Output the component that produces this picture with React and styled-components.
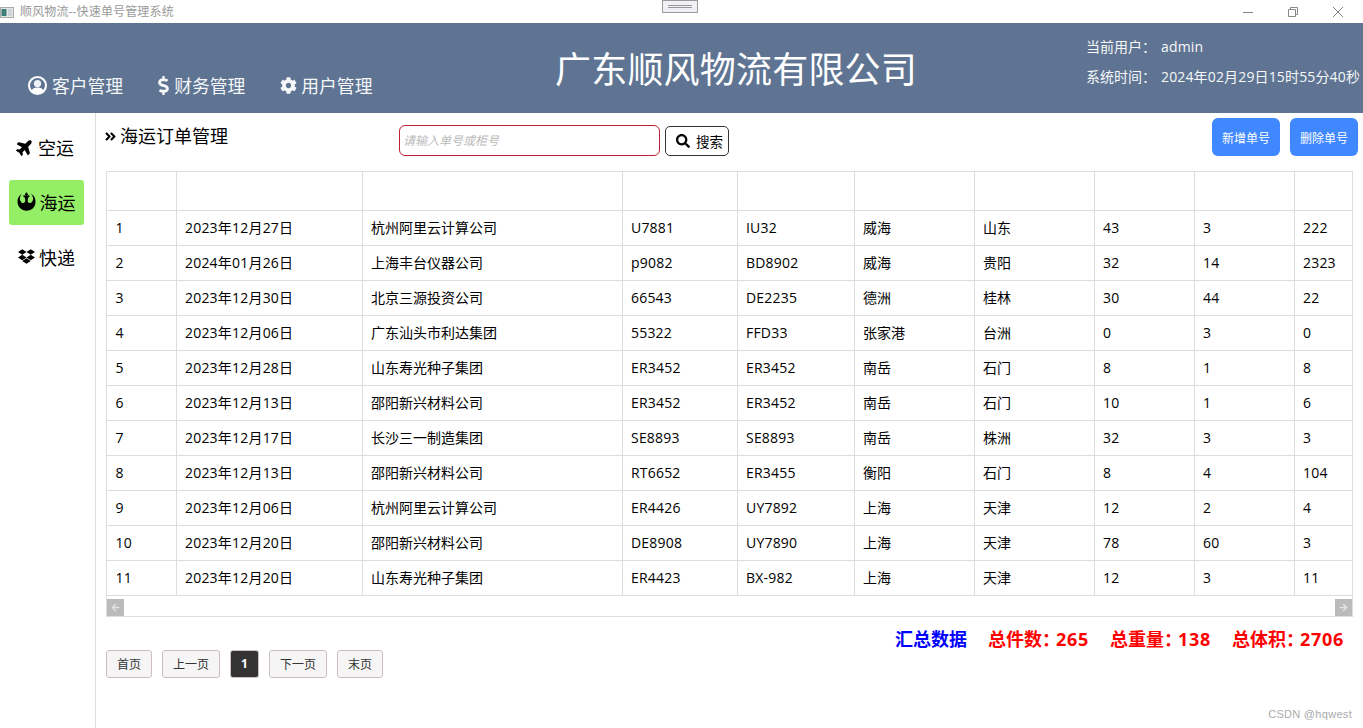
import React from 'react';
import styled, { createGlobalStyle } from 'styled-components';
import { FaCog, FaDollarSign, FaPlane, FaRebel, FaDropbox, FaAngleDoubleRight, FaSearch, FaArrowLeft, FaArrowRight } from 'react-icons/fa';

const FONT = '"Open Sans", "Noto Sans CJK SC", sans-serif';

const Global = createGlobalStyle`
  html, body { margin: 0; padding: 0; background: #fff; overflow: hidden; }
  body { font-family: ${FONT}; color: #000; }
  * { box-sizing: border-box; }
`;

const Page = styled.div`
  width: 1363px; height: 728px; display: flex; flex-direction: column; position: relative; overflow: hidden;
`;
const TitleBar = styled.div`
  height: 23px; display: flex; align-items: center; position: relative; background: #fff;
`;
const AppName = styled.span`
  font-size: 12px; color: #999; margin-left: 6px; line-height: 23px; letter-spacing: 0.15px;
`;
const DragHandle = styled.div`
  position: absolute; left: 662px; top: 0; width: 36px; height: 13px; background: #f0f0f5; border: 1px solid #999;
  display: flex; flex-direction: column; justify-content: center; gap: 1px; padding: 0 5px;
  &::before, &::after { content: ""; height: 1px; background: #999; }
`;
const WindowControls = styled.div`
  margin-left: auto; display: flex; align-items: center; gap: 35px; padding-right: 20px;
`;
const Header = styled.header`
  height: 90px; background: #5e7492; color: #fff; display: flex;
`;
const Nav = styled.nav`
  display: flex; align-items: center; gap: 35px; padding: 35px 0 0 28px; height: 90px; width: 480px;
`;
const NavItem = styled.div`
  display: flex; align-items: center; gap: ${p => p.$gap}px; font-size: 17.8px; line-height: 26px; color: #f4f6f8;
  svg { display: block; margin-left: ${p => p.$inset}px; }
`;
const CompanyName = styled.h1`
  margin: 0 0 0 75px; padding-top: 2px; font-size: 36px; font-weight: 400; line-height: 90px; width: 362px; white-space: nowrap; letter-spacing: 0.2px;
`;
const UserInfo = styled.div`
  margin-left: auto; width: 277px; padding-top: 9px; font-size: 14px; line-height: 30px; white-space: nowrap; color: #f7f8fa;
`;
const InfoLabel = styled.span`
  margin-right: 5px;
`;
const InfoValue = styled.span`
  letter-spacing: 0.15px;
`;
const Body = styled.div`
  flex: 1; display: flex; min-height: 0;
`;
const Sidebar = styled.aside`
  width: 96px; border-right: 1px solid #ddd; padding: 12px 11px 0 9px; display: flex; flex-direction: column; gap: 10px;
`;
const SideItem = styled.div`
  height: 45px; border-radius: 3px; display: flex; align-items: center; gap: ${p => p.$gap}px; padding: 0 0 2px ${p => p.$pad}px;
  font-size: 18px; background: ${p => (p.$active ? '#94ee66' : 'transparent')};
  svg { transform: rotate(${p => p.$turn || 0}deg); }
`;
const Main = styled.main`
  flex: 1; padding: 5px 5px 0 10px; min-width: 0;
`;
const Toolbar = styled.div`
  height: 53px; display: flex; align-items: flex-start;
`;
const SectionTitle = styled.div`
  width: 295px; display: flex; align-items: center; gap: 3px; font-size: 18px; line-height: 26px; padding-top: 5px; margin-left: -2px;
`;
const SearchInput = styled.input`
  width: 261px; height: 31px; margin-top: 7px; border: 1px solid #c02030; border-radius: 6px; padding: 0 3px; font: italic 12px ${FONT}; outline: none;
  &::placeholder { color: #bbb; opacity: 1; }
`;
const SearchButton = styled.button`
  width: 64px; height: 30px; margin: 8px 0 0 5px; border: 1px solid #333; border-radius: 5px; background: #fff; font: 13.5px ${FONT};
  display: flex; align-items: center; justify-content: center; gap: 6px; padding: 0 0 0 5px; color: #000;
`;
const Actions = styled.div`
  margin-left: auto; display: flex; gap: 10px;
`;
const ActionButton = styled.button`
  width: 68px; height: 38px; border: none; border-radius: 6px; background: #4088ff; color: #fff; font: 12px ${FONT}; padding: 1px 0 0;
`;
const TableFrame = styled.div`
  width: 1247px; border: 1px solid #ddd; overflow: hidden;
`;
const Table = styled.table`
  table-layout: fixed; border-collapse: collapse; width: 1245px; font-size: 14px;
`;
const Col = styled.col`
  width: ${p => p.$w}px;
`;
const HeadCell = styled.th`
  height: 38px; border-right: 1px solid #ddd; border-bottom: 1px solid #ddd; padding: 0;
  &:last-child { border-right: none; }
`;
const Cell = styled.td`
  height: 35px; padding: 0 8px 0 8.5px; border-right: 1px solid #ddd; border-bottom: 1px solid #ddd; white-space: nowrap; line-height: 20px; letter-spacing: 0.2px;
  &:nth-child(3), &:nth-child(6), &:nth-child(7) { letter-spacing: 0; }
  &:last-child { border-right: none; }
`;
const ScrollBar = styled.div`
  height: 20px; display: flex; justify-content: space-between; align-items: flex-start;
`;
const ScrollButton = styled.div`
  width: 17px; height: 17px; background: #bbb; color: #e4e4e4; display: flex; align-items: center; justify-content: center; margin-top: 3px;
`;
const Summary = styled.div`
  display: flex; justify-content: flex-end; gap: 21px; padding: 9px 9px 0 0; font-size: 18px; font-weight: 700; line-height: 26px; width: 1247px;
`;
const SummaryItem = styled.span`
  color: ${p => p.$color};
`;
const SummaryColon = styled.span`
  font-feature-settings: "halt";
  margin-right: 5px;
`;
const SummaryNumber = styled.span`
  letter-spacing: 0.7px;
`;
const Pager = styled.div`
  display: flex; gap: 10px; margin-top: -2px;
`;
const PageButton = styled.button`
  height: 28px; width: ${p => p.$w}px; padding: 0; border-radius: 3px; border: 1px solid #cdbfbf; font: ${p => (p.$active ? 700 : 400)} 12px ${FONT};
  background: ${p => (p.$active ? '#333' : '#f5f5f5')}; color: ${p => (p.$active ? '#fff' : '#333')};
`;
const Watermark = styled.div`
  position: absolute; right: 11px; bottom: 8px; font: 11px "Liberation Sans", sans-serif; color: #aaa; letter-spacing: 0.3px;
`;

const widths = [69, 186, 260, 115, 117, 120, 120, 100, 100, 58];
const rows = [
  ['1', '2023年12月27日', '杭州阿里云计算公司', 'U7881', 'IU32', '威海', '山东', '43', '3', '222'],
  ['2', '2024年01月26日', '上海丰台仪器公司', 'p9082', 'BD8902', '威海', '贵阳', '32', '14', '2323'],
  ['3', '2023年12月30日', '北京三源投资公司', '66543', 'DE2235', '德洲', '桂林', '30', '44', '22'],
  ['4', '2023年12月06日', '广东汕头市利达集团', '55322', 'FFD33', '张家港', '台洲', '0', '3', '0'],
  ['5', '2023年12月28日', '山东寿光种子集团', 'ER3452', 'ER3452', '南岳', '石门', '8', '1', '8'],
  ['6', '2023年12月13日', '邵阳新兴材料公司', 'ER3452', 'ER3452', '南岳', '石门', '10', '1', '6'],
  ['7', '2023年12月17日', '长沙三一制造集团', 'SE8893', 'SE8893', '南岳', '株洲', '32', '3', '3'],
  ['8', '2023年12月13日', '邵阳新兴材料公司', 'RT6652', 'ER3455', '衡阳', '石门', '8', '4', '104'],
  ['9', '2023年12月06日', '杭州阿里云计算公司', 'ER4426', 'UY7892', '上海', '天津', '12', '2', '4'],
  ['10', '2023年12月20日', '邵阳新兴材料公司', 'DE8908', 'UY7890', '上海', '天津', '78', '60', '3'],
  ['11', '2023年12月20日', '山东寿光种子集团', 'ER4423', 'BX-982', '上海', '天津', '12', '3', '11'],
];
const totals = [['总件数', '265'], ['总重量', '138'], ['总体积', '2706']];

const AppIcon = () => (
  <svg width="14" height="14" viewBox="0 0 14 14">
    <rect x="0.5" y="2.5" width="13" height="10" fill="#e8e8e8" stroke="#aaa" />
    <rect x="1.5" y="4" width="5" height="7" fill="#3d7f78" />
    <rect x="8" y="4" width="4" height="7" fill="#cfd4d8" />
  </svg>
);
const MinIcon = () => (
  <svg width="10" height="10" viewBox="0 0 10 10"><path d="M0 5.5H10" stroke="#888" fill="none" /></svg>
);
const RestoreIcon = () => (
  <svg width="10" height="10" viewBox="0 0 10 10"><path d="M.5 2.5h7v7h-7zM2.5 2.5v-2h7v7h-2" stroke="#888" fill="none" /></svg>
);
const CloseIcon = () => (
  <svg width="10" height="10" viewBox="0 0 10 10"><path d="M0 0L10 10M10 0L0 10" stroke="#888" fill="none" /></svg>
);
const UserRing = () => (
  <svg width="19" height="19" viewBox="0 0 19 19">
    <circle cx="9.5" cy="9.5" r="8.5" fill="none" stroke="#fff" strokeWidth="2" />
    <circle cx="9.5" cy="7.6" r="3.6" fill="#eef1f5" />
    <path d="M3.4 15c.8-2.6 3-3.6 6.100-3.600s5.300 1 6.100 3.600a8 8 0 0 1-12.200 0z" fill="#fff" />
  </svg>
);

export default function App() {
  return (
    <Page>
      <Global />
      <TitleBar>
        <AppIcon />
        <AppName>顺风物流--快速单号管理系统</AppName>
        <DragHandle />
        <WindowControls>
          <MinIcon />
          <RestoreIcon />
          <CloseIcon />
        </WindowControls>
      </TitleBar>
      <Header>
        <Nav>
          <NavItem $gap={5} $inset={0}><UserRing />客户管理</NavItem>
          <NavItem $gap={1} $inset={-4}><FaDollarSign size={19} />财务管理</NavItem>
          <NavItem $gap={4} $inset={0}><FaCog size={17} />用户管理</NavItem>
        </Nav>
        <CompanyName>广东顺风物流有限公司</CompanyName>
        <UserInfo>
          <div><InfoLabel>当前用户：</InfoLabel><InfoValue>admin</InfoValue></div>
          <div><InfoLabel>系统时间：</InfoLabel><InfoValue>2024年02月29日15时55分40秒</InfoValue></div>
        </UserInfo>
      </Header>
      <Body>
        <Sidebar>
          <SideItem $pad={7} $gap={4} $turn={-45}><FaPlane size={18} />空运</SideItem>
          <SideItem $active $pad={8} $gap={3.5}><FaRebel size={19} />海运</SideItem>
          <SideItem $pad={9} $gap={4}><FaDropbox size={17} />快递</SideItem>
        </Sidebar>
        <Main>
          <Toolbar>
            <SectionTitle><FaAngleDoubleRight size={13} /><span>海运订单管理</span></SectionTitle>
            <SearchInput placeholder="请输入单号或柜号" />
            <SearchButton><FaSearch size={14} />搜索</SearchButton>
            <Actions>
              <ActionButton>新增单号</ActionButton>
              <ActionButton>删除单号</ActionButton>
            </Actions>
          </Toolbar>
          <TableFrame>
            <Table>
              <colgroup>
                {widths.map((w, i) => <Col key={i} $w={w} />)}
              </colgroup>
              <thead>
                <tr>{widths.map((_, i) => <HeadCell key={i} />)}</tr>
              </thead>
              <tbody>
                {rows.map(r => (
                  <tr key={r[0]}>{r.map((c, i) => <Cell key={i}>{c}</Cell>)}</tr>
                ))}
              </tbody>
            </Table>
            <ScrollBar>
              <ScrollButton><FaArrowLeft size={9} /></ScrollButton>
              <ScrollButton><FaArrowRight size={9} /></ScrollButton>
            </ScrollBar>
          </TableFrame>
          <Summary>
            <SummaryItem $color="#0000ff">汇总数据</SummaryItem>
            {totals.map(([k, v]) => (
              <SummaryItem key={k} $color="#ff0000">
                {k}<SummaryColon>：</SummaryColon><SummaryNumber>{v}</SummaryNumber>
              </SummaryItem>
            ))}
          </Summary>
          <Pager>
            <PageButton $w={46}>首页</PageButton>
            <PageButton $w={58}>上一页</PageButton>
            <PageButton $w={29} $active>1</PageButton>
            <PageButton $w={58}>下一页</PageButton>
            <PageButton $w={46}>末页</PageButton>
          </Pager>
        </Main>
      </Body>
      <Watermark>CSDN @hqwest</Watermark>
    </Page>
  );
}
